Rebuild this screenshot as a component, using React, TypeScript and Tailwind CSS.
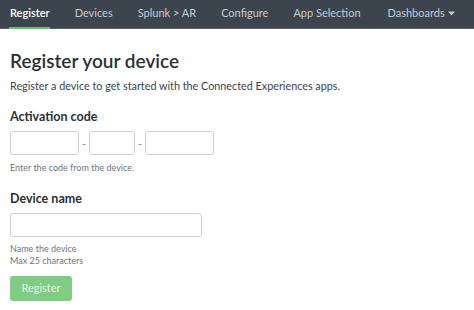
const navItems = ["Register", "Devices", "Splunk > AR", "Configure", "App Selection"];

function CodeInput({ w }: { w: string }) {
  return <div className={`h-[24px] ${w} rounded-[3px] border border-[#cfd2d5] bg-white`} />;
}

export default function App() {
  return (
    <div className="w-[474px] h-[310px] overflow-hidden bg-white font-['Lato',sans-serif] text-[#3c444d]">
      <nav className="h-[29px] bg-[#3c444d] border-b border-[#5a626a] flex items-stretch pl-[10px] text-[11px] text-[#c3cbd4]">
        {navItems.map((item, i) => (
          <div
            key={item}
            className={`relative flex items-center pb-[2px] mr-[25px] ${i === 0 ? "text-white font-semibold" : ""}`}
          >
            {item}
            {i === 0 && <span className="absolute left-[-1px] right-0 bottom-[-1px] h-[2px] bg-[#65c16c]" />}
          </div>
        ))}
        <div className="flex items-center pb-[2px] ml-[2px]">
          Dashboards
          <svg width="7" height="5" viewBox="0 0 7 5" className="ml-[3px]">
            <path d="M0 0.5H7L3.5 4.5Z" fill="#c3cbd4" />
          </svg>
        </div>
      </nav>

      <main className="px-[10px]">
        <h1 className="mt-[20px] text-[19px] leading-[24px] font-semibold text-[#2b3033]">Register your device</h1>
        <p className="mt-[6px] text-[10.8px] leading-[14px] text-[#3c444d]">
          Register a device to get started with the Connected Experiences apps.
        </p>

        <h2 className="mt-[16px] text-[12.5px] leading-[16px] font-bold text-[#2b3033]">Activation code</h2>
        <div className="mt-[6px] flex items-center">
          <CodeInput w="w-[69px]" />
          <span className="w-[10px] text-center text-[10px] text-[#5c6773]">-</span>
          <CodeInput w="w-[46px]" />
          <span className="w-[10px] text-center text-[10px] text-[#5c6773]">-</span>
          <CodeInput w="w-[69px]" />
        </div>
        <p className="mt-[7px] text-[9px] leading-[12px] text-[#6b7580]">Enter the code from the device.</p>

        <h2 className="mt-[17px] text-[12.5px] leading-[16px] font-bold text-[#2b3033]">Device name</h2>
        <div className="mt-[6px] h-[24px] w-[192px] rounded-[3px] border border-[#cfd2d5]" />
        <p className="mt-[6px] text-[9px] leading-[12px] text-[#6b7580]">Name the device</p>
        <p className="text-[9px] leading-[12px] text-[#6b7580]">Max 25 characters</p>

        <button className="mt-[9px] h-[25px] w-[62px] rounded-[3px] bg-[#7fcc84] text-[11px] text-[#e6f5e7]">
          Register
        </button>
      </main>
    </div>
  );
}
